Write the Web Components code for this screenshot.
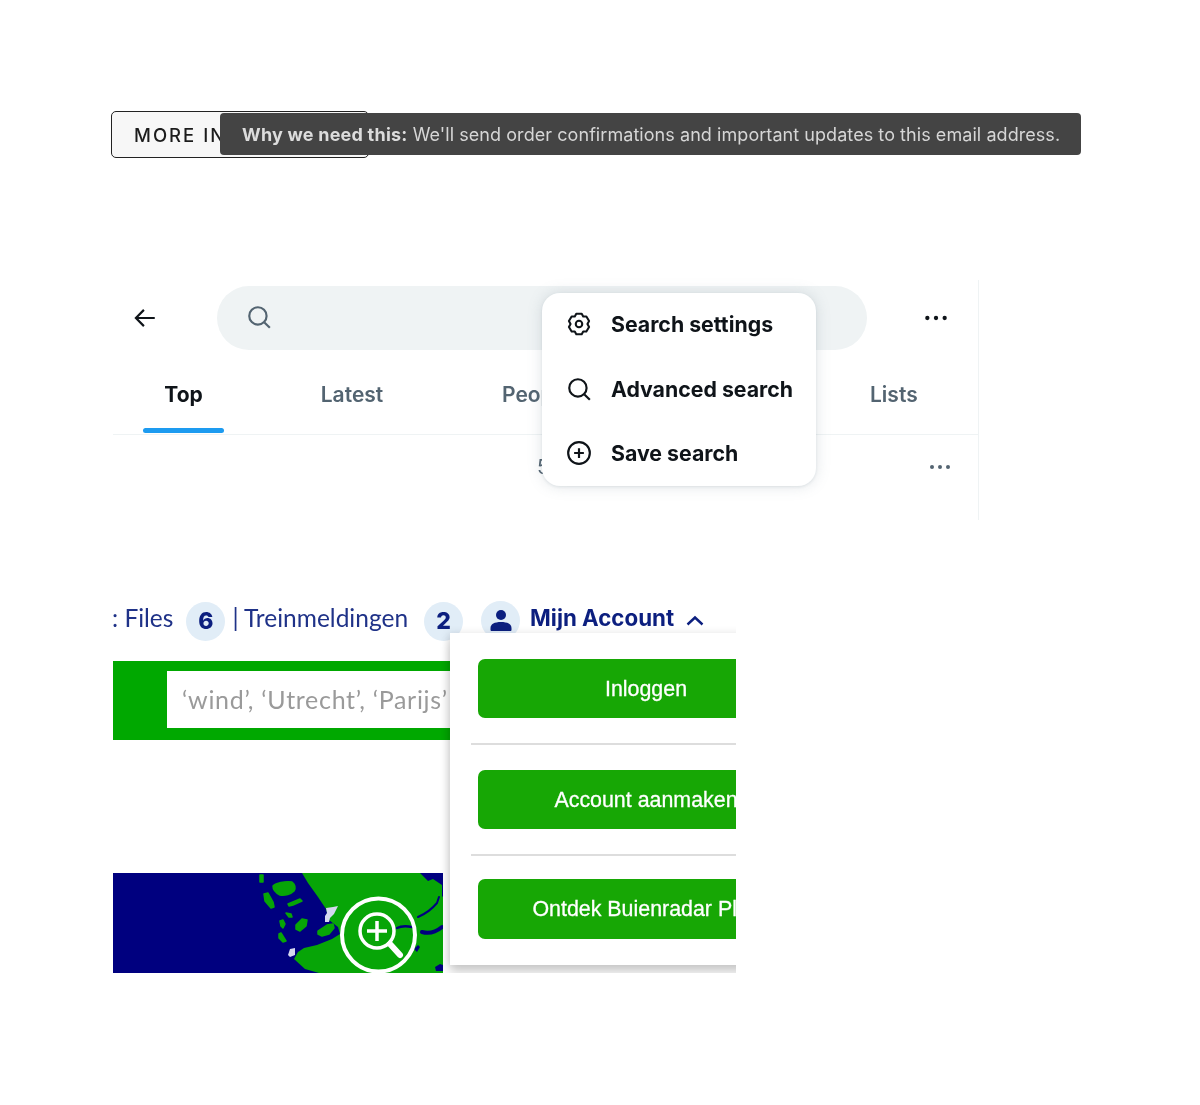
<!DOCTYPE html>
<html><head><meta charset="utf-8"><title>UI</title>
<style>
html,body{margin:0;background:#fff}
body{display:flex;flex-direction:column;align-items:flex-start;padding-top:111px;height:994px;overflow:hidden}
</style></head><body>
<x-tip-row></x-tip-row>
<x-search-panel></x-search-panel>
<x-radar-panel></x-radar-panel>
<script>
const mk=(name,html)=>customElements.define(name,class extends HTMLElement{constructor(){super();this.attachShadow({mode:'open'}).innerHTML=html}});
mk('x-tip-row',`<style>
:host{display:block;position:relative;margin-left:111px;width:970px;height:47px;filter:blur(.45px)}
.btn{box-sizing:border-box;width:258px;height:47px;background:#f7f7f7;border:1.5px solid #222;border-radius:5px;font:500 18.5px/47px Inter,sans-serif;letter-spacing:2px;color:#1c1c1c;padding:0 0 0 22px;overflow:hidden;white-space:nowrap}
.tip{position:absolute;left:109px;top:2px;box-sizing:border-box;width:861px;height:42px;background:#444;border-radius:4px;color:#d6d6d6;font:400 18px/43px Inter,sans-serif;padding-left:22px;white-space:nowrap;letter-spacing:.06px}
b{font-weight:700;color:#dcdcdc;letter-spacing:.22px}
</style><div class="btn">MORE INFO</div><div class="tip"><b>Why we need this:</b> We'll send order confirmations and important updates to this email address.</div>`);
mk('x-search-panel',`<style>
:host{display:block;position:relative;margin:122px 0 0 113px;width:866px;height:240px;box-sizing:border-box;border-right:1px solid #eff3f4;font-family:Inter,sans-serif;filter:blur(.45px)}
.top{display:flex;align-items:center;height:64px;padding-top:6px}
.back{width:104px;display:flex;padding-left:19px;box-sizing:border-box}
.pill{width:650px;height:64px;background:#eff3f4;border-radius:32px;display:flex;align-items:center;padding:0 0 2px 29px;box-sizing:border-box}
.more{margin-left:56px;display:flex}
.tabs{display:flex;height:72px;margin-top:12px;border-bottom:1px solid #eff3f4}
.tab{position:relative;font:600 21px/66px Inter,sans-serif;color:#536471;text-align:center}
.tab.on{color:#0f1419;font-weight:700}
.tab.on i{position:absolute;left:30px;width:81px;bottom:1px;height:5px;border-radius:3px;background:#1d9bf0}
.t1{width:141px}.t2{width:196px}.t3{width:420px;text-align:left;text-indent:52px}.t4{flex:1;text-align:left}
.row2{display:flex;justify-content:flex-end;padding:20px 26px 0 0}
.menu{position:absolute;left:429px;top:13px;width:274px;height:193px;background:#fff;border-radius:18px;box-shadow:0 0 15px rgba(101,119,134,.2),0 1px 3px rgba(101,119,134,.15);display:flex;flex-direction:column;font:700 21.3px Inter,sans-serif;color:#0f1419}
.item{height:64px;display:flex;align-items:center;padding-left:24px;gap:19px;white-space:nowrap;box-sizing:border-box}
.item:first-child{padding-bottom:2px}
.item svg{flex:none}
.stub{position:absolute;left:424px;top:175px;font:400 20px Inter,sans-serif;color:#536471}
</style>
<div class="top">
<div class="back"><svg width="26" height="26" viewBox="0 0 24 24" fill="none" stroke="#0f1419" stroke-width="2"><path d="M21 12H4M11 4.500 3.600 12l7.400 7.500"/></svg></div>
<div class="pill"><svg width="26" height="26" viewBox="0 0 24 24" fill="none" stroke="#536471" stroke-width="2"><circle cx="11" cy="11" r="8"/><path d="m17 17 5 5"/></svg></div>
<div class="more"><svg width="26" height="26" viewBox="0 0 24 24" fill="#0f1419"><circle cx="4" cy="12" r="2"/><circle cx="12" cy="12" r="2"/><circle cx="20" cy="12" r="2"/></svg></div>
</div>
<div class="tabs">
<div class="tab on t1">Top<i></i></div>
<div class="tab t2">Latest</div>
<div class="tab t3">People</div>
<div class="tab t4">Lists</div>
</div>
<div class="row2"><svg width="24" height="24" viewBox="0 0 24 24" fill="#536471"><circle cx="4" cy="12" r="2"/><circle cx="12" cy="12" r="2"/><circle cx="20" cy="12" r="2"/></svg></div>
<div class="stub">5</div>
<div class="menu">
<div class="item"><svg width="26" height="26" viewBox="0 0 24 24" fill="none" stroke="#0f1419" stroke-width="1.900" stroke-linejoin="round"><path d="M9.500 2.500h5l1.400 2.600 2.900-.1 2.500 4.200-1.500 2.800 1.500 2.800-2.500 4.200-2.900-.1-1.400 2.600h-5l-1.400-2.600-2.900.1-2.500-4.200 1.500-2.800-1.500-2.800L5.200 5l2.900.1z"/><circle cx="12" cy="12" r="3"/></svg><span>Search settings</span></div>
<div class="item"><svg width="26" height="26" viewBox="0 0 24 24" fill="none" stroke="#0f1419" stroke-width="2"><circle cx="11" cy="11" r="8"/><path d="m17 17 5 5"/></svg><span>Advanced search</span></div>
<div class="item"><svg width="26" height="26" viewBox="0 0 24 24" fill="none" stroke="#0f1419" stroke-width="2"><circle cx="12" cy="12" r="10"/><path d="M12 7.500v9M7.500 12h9"/></svg><span>Save search</span></div>
</div>`);
mk('x-radar-panel',`<style>
:host{display:block;position:relative;margin:80px 0 0 113px;width:623px;height:373px;overflow:hidden;font-family:Lato,sans-serif;filter:blur(.45px)}
.nav{display:flex;align-items:center;height:42px;margin-bottom:19px;white-space:nowrap;font:400 24.5px Lato,sans-serif;color:#1f3288}
.nav .t{margin-top:-8px}
.badge{flex:none;width:39px;height:39px;border-radius:50%;background:#e1edf7;color:#0c1f7f;font:800 23px/38px Inter,sans-serif;text-align:center}
.acct{font:700 22.3px Inter,sans-serif;color:#0c1f7f;margin:-8px 0 0 10px}
.bar{height:79px;background:#00a800;padding:10px 0 12px 54px;box-sizing:border-box}
.input{height:57px;background:#fff;color:#9a9a9a;font:400 25px/57px Lato,sans-serif;padding-left:15px;white-space:nowrap;letter-spacing:.7px}
.map{display:block;margin-top:133px;width:330px;height:100px}
.menu{position:absolute;left:337px;top:33px;width:340px;height:332px;background:#fff;box-shadow:0 8px 10px rgba(0,0,0,.18),-2px 0 8px rgba(0,0,0,.1);padding:26px 0 0 21px;box-sizing:border-box}
.b{width:336px;height:59px;margin-left:7px;background:#17a705;border-radius:7px;color:#fff;font:400 21.4px/60px "Liberation Sans",sans-serif;-webkit-text-stroke:.3px #fff;text-align:center;white-space:nowrap}
hr{margin:25px 0;border:0;border-top:2px solid #ddd;width:100%}
</style>
<div class="nav">
<span class="t" style="margin-left:-1px">:&nbsp;Files</span>
<span class="badge" style="margin-left:13px">6</span>
<span class="t" style="margin-left:7px">| Treinmeldingen</span>
<span class="badge" style="margin-left:16px">2</span>
<span class="badge" style="margin:-2px 0 0 18px;display:flex;align-items:center;justify-content:center"><svg width="24" height="24" viewBox="0 0 24 24" fill="#0c1f7f"><circle cx="12" cy="7" r="5"/><path d="M1.500 22v-2c0-4 4-6 10.500-6s10.500 2 10.500 6v2c0 .5-.5 1-1 1H2.500c-.5 0-1-.5-1-1z"/></svg></span>
<span class="acct">Mijn Account</span>
<svg style="margin:-1px 0 0 12px" width="18" height="11" viewBox="0 0 18 11" fill="none" stroke="#0c1f7f" stroke-width="2.400"><path d="M1.500 9.500 9 2.500l7.500 7"/></svg>
</div>
<div class="bar"><div class="input">‘wind’, ‘Utrecht’, ‘Parijs’</div></div>
<svg class="map" viewBox="0 0 330 100"><rect width="330" height="100" fill="#00007f"/>
<path fill="#07a507" d="M189 0H330V100H206L192 96 181 86 185 79 191 75 204 72 219 66 227 61 225 54 216 47 213 36 205 24 195 10Z"/>
<g fill="#07a507" stroke="#07a507" stroke-width="1.500" stroke-linejoin="round">
<path d="M160 13c3-3 12-5 19-4 3 2 4 6 2 9-3 3-9 5-14 4-4-2-7-5-7-9z"/>
<path d="M151 21l4-1 5 9 1 5-3 1-6-7z"/>
<path d="M175 31l12-5 2 2-9 4-4 1z"/>
<path d="M183 52l6-6 5 1-1 6-6 5-4-2z"/>
<path d="M205 58l9-6 6-1 1 4-5 6-7 2-4-2z"/>
<path d="M167 48l3-1 2 4-2 4-2-2z"/>
<path d="M166 61l2-1 5 8-3 1-4-4z"/>
<path d="M173 40l5 1 1 3-3 0z"/>
<path d="M147 2h3v7h-3z"/>
</g>
<g fill="none" stroke="#00007f" stroke-linecap="round">
<path stroke-width="2" d="M305 44c7-3 14-8 19-14l2-6"/>
<path stroke-width="4" d="M309 59c7 2 14 0 20-5"/>
<path stroke-width="2.500" d="M284 55c4-2 10-2 15-1"/>
</g>
<path fill="#00007f" d="M307 0h23v24l-1-1 0-11-9-6-5 2zM301 76l4-4 2 2-3 5zM322 94l5-3 3 1v6h-7z"/>
<path fill="#d5d8ef" d="M213 35l7-1 5-1-4 8-4 4-1 4-4 0 0-6 2-3zM177 76l5-1 0 7-5 2-2-2z"/>
<circle cx="265.500" cy="62" r="36.500" fill="none" stroke="#fff" stroke-width="4"/>
<circle cx="264" cy="58" r="17" fill="none" stroke="#fff" stroke-width="3.500"/>
<path d="M264 48v20M254 58h20" stroke="#fff" stroke-width="3.500"/>
<path d="m277 71 10 11" stroke="#fff" stroke-width="6" stroke-linecap="round"/></svg>
<div class="menu">
<div class="b">Inloggen</div><hr>
<div class="b">Account aanmaken</div><hr style="margin-bottom:23px">
<div class="b" style="height:60px">Ontdek Buienradar Plus</div>
</div>`);
</script>
</body></html>
